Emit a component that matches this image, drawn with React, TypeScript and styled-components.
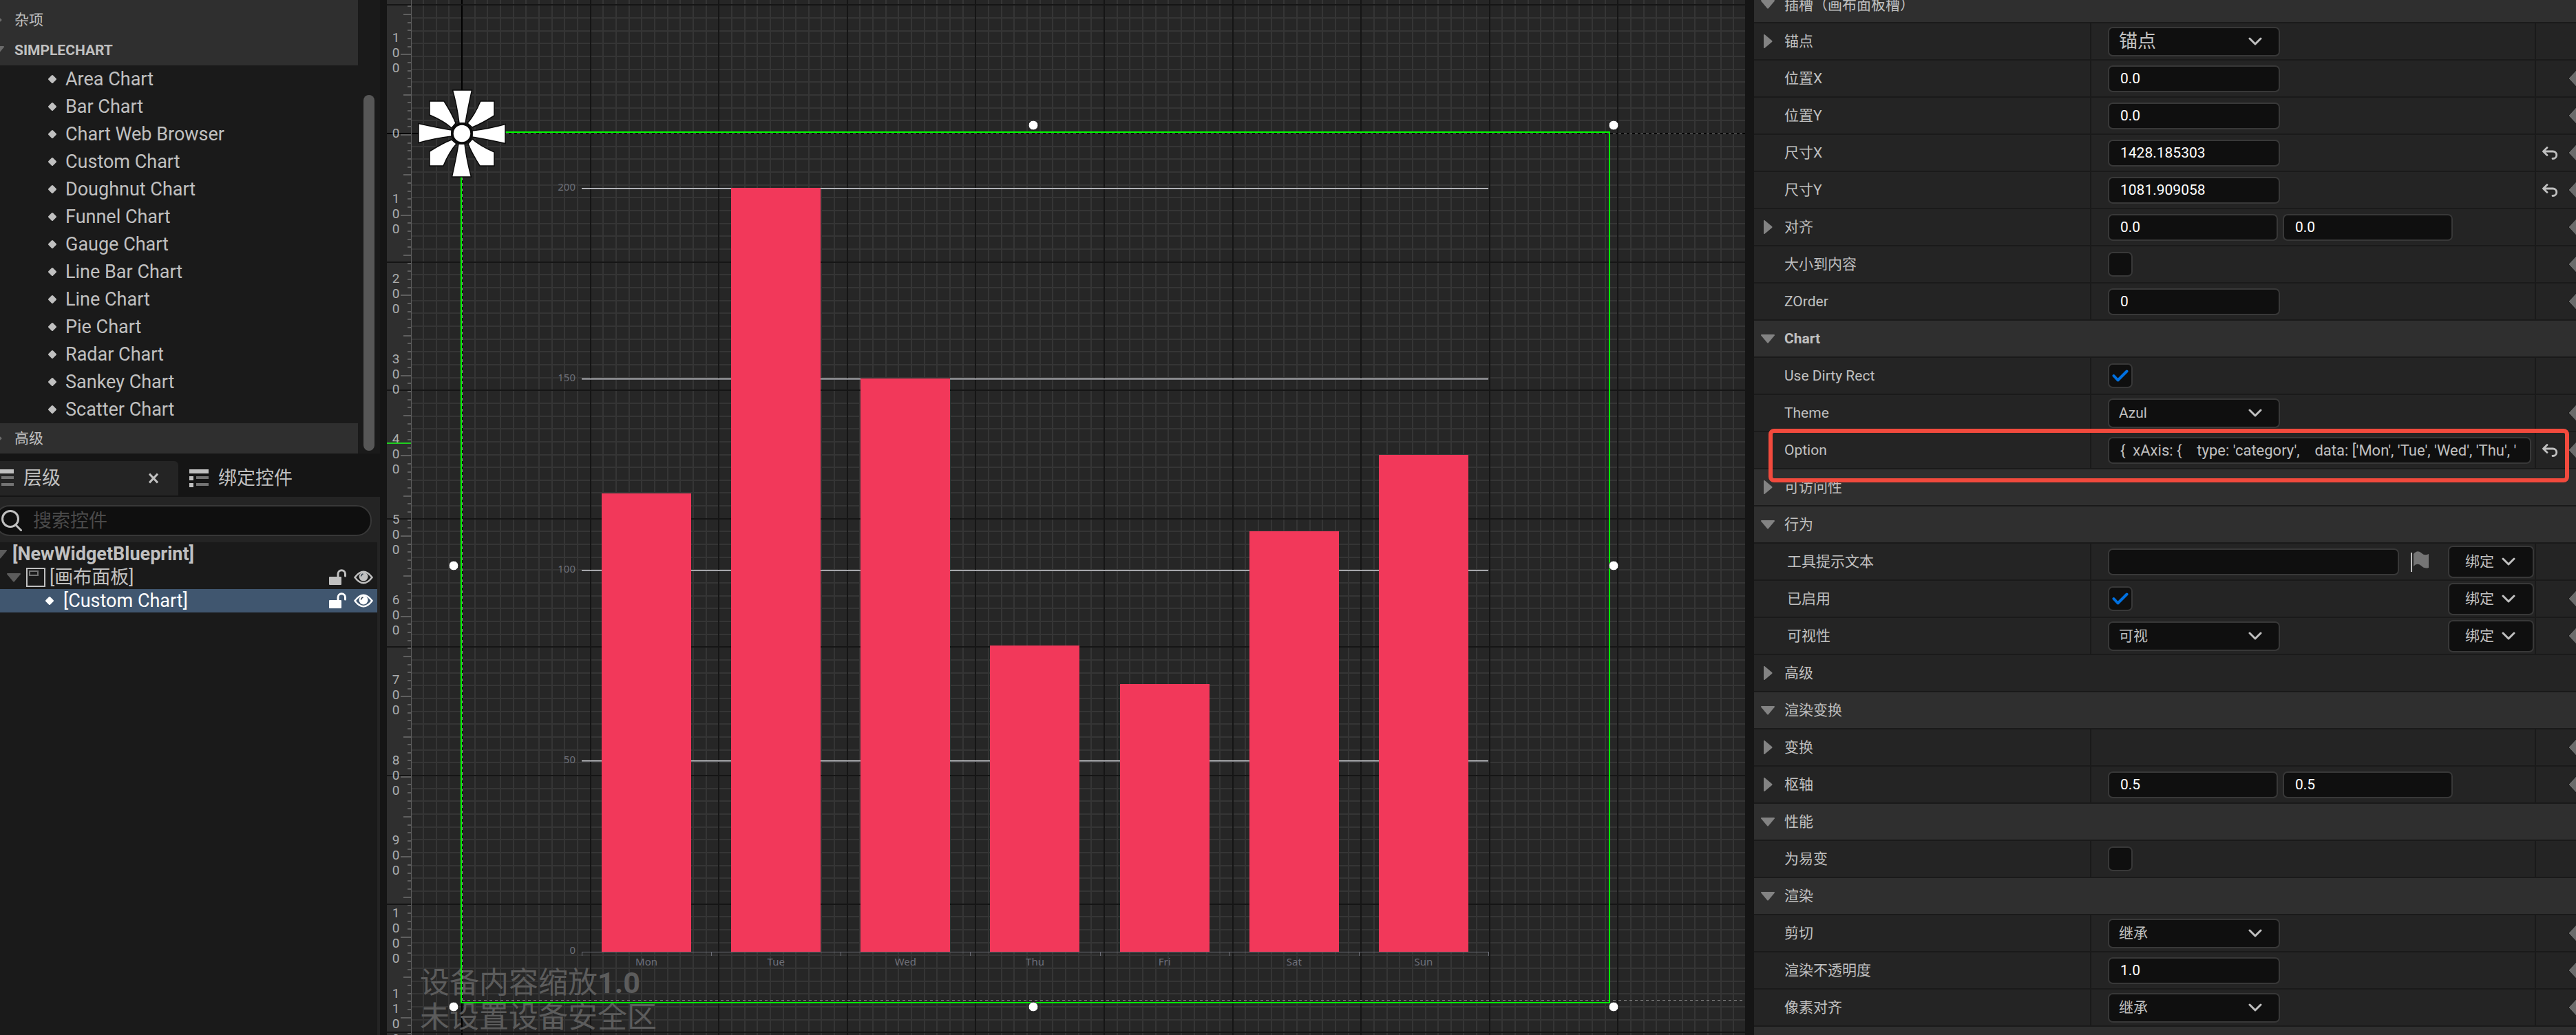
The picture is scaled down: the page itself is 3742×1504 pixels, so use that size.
import React from "react";
import styled, { createGlobalStyle, css } from "styled-components";

const color = {
  gap: "#151515",
  well: "#1a1a1a",
  panel: "#242424",
  header: "#2f2f2f",
  field: "#0f0f0f",
  edge: "#383838",
  text: "#c0c0c0",
  arrow: "#838383",
  blue: "#0070e0",
  select: "#40566f",
  bar: "#f2385a",
};

const uiFont = `Roboto, "Noto Sans CJK SC", sans-serif`;

const GlobalStyle = createGlobalStyle`
  *, *::before, *::after { box-sizing: border-box; }
  body {
    margin: 0;
    background: ${color.gap};
    color: ${color.text};
    font: 21px/28px ${uiFont};
    overflow: hidden;
  }
  button, input, select { font: inherit; color: inherit; margin: 0; }
  svg { display: block; flex: none; }
`;

const Editor = styled.div`
  display: flex;
  height: 100vh;
  overflow: hidden;
`;

/* ---------- icons ---------- */

const Expander = ({ open = false, fill = color.arrow }: { open?: boolean; fill?: string }) => (
  <svg width="20" height="20" viewBox="0 0 20 20" aria-hidden="true">
    {open ? (
      <path d="M1 4h18a1 1 0 0 1 .8 1.400L11 16q-1 1-2 0L.2 5.400A1 1 0 0 1 1 4z" fill={fill} />
    ) : (
      <path d="M4 1a1 1 0 0 1 1.600-.8L16 9q1 1 0 2L5.600 19.800A1 1 0 0 1 4 19z" fill={fill} />
    )}
  </svg>
);

const Bullet = ({ fill = color.text }: { fill?: string }) => (
  <svg width="28" height="28" viewBox="0 0 28 28" aria-hidden="true">
    <path d="M14 9.500L18.500 14L14 18.500L9.500 14z" fill={fill} stroke={fill} strokeWidth="3" strokeLinejoin="round" />
  </svg>
);

const Chevron = () => (
  <svg width="20" height="12" viewBox="0 0 20 12" aria-hidden="true">
    <path d="M2 2l8 8 8-8" fill="none" stroke={color.text} strokeWidth="3" strokeLinecap="round" strokeLinejoin="round" />
  </svg>
);

const ListIcon = () => (
  <svg width="28" height="26" viewBox="0 0 28 26" aria-hidden="true">
    <path d="M0 0h28v6H0zM0 10h6v6H0zM0 20h6v6H0z" fill={color.text} />
    <path d="M10 10h18v4H10zM10 20h18v4H10z" fill="#747474" />
  </svg>
);

const CloseIcon = () => (
  <svg width="14" height="16" viewBox="0 0 14 16" aria-hidden="true">
    <path d="M1 1.500l12 13M13 1.500l-12 13" stroke={color.text} strokeWidth="3" />
  </svg>
);

const SearchIcon = () => (
  <svg width="30" height="32" viewBox="0 0 30 32" aria-hidden="true">
    <circle cx="13" cy="13" r="11.500" fill="none" stroke={color.text} strokeWidth="3" />
    <path d="M20.500 21.500l8 8" stroke={color.text} strokeWidth="3" strokeLinecap="round" />
  </svg>
);

const PanelIcon = () => (
  <svg width="28" height="28" viewBox="0 0 28 28" aria-hidden="true">
    <rect x="1" y="1" width="26" height="26" fill="none" stroke={color.text} strokeWidth="2" />
    <rect x="5" y="5" width="12" height="6" fill="none" stroke="#747474" strokeWidth="2" />
  </svg>
);

const UnlockIcon = ({ fill }: { fill: string }) => (
  <svg width="26" height="24" viewBox="0 0 26 24" aria-hidden="true">
    <rect x="0" y="11" width="18" height="12" rx="1" fill={fill} />
    <path d="M13 12V7a5 5 0 0 1 10.500 0v3" fill="none" stroke={fill} strokeWidth="3" strokeLinecap="round" />
  </svg>
);

const EyeIcon = ({ fill }: { fill: string }) => (
  <svg width="28" height="20" viewBox="0 0 28 20" aria-hidden="true">
    <path d="M1.500 10Q14-6.500 26.500 10Q14 26.500 1.500 10z" fill="none" stroke={fill} strokeWidth="2.500" />
    <circle cx="14" cy="9" r="6.500" fill={fill} />
    <path d="M10.500 8.500a4 4 0 0 1 3-3.500" fill="none" stroke="#33404d" strokeWidth="1.500" />
  </svg>
);

const CheckIcon = () => (
  <svg width="24" height="18" viewBox="0 0 24 18" aria-hidden="true">
    <path d="M2.500 9l6 6.500L21.500 2.500" fill="none" stroke={color.blue} strokeWidth="4" strokeLinecap="round" strokeLinejoin="round" />
  </svg>
);

const ResetIcon = () => (
  <svg width="23" height="19" viewBox="0 0 23 19" aria-hidden="true">
    <path d="M7 1.500L1.500 7L7 12.500M2 7h13.500a5.200 5.200 0 0 1 0 10.500H15" fill="none" stroke={color.text} strokeWidth="2.800" strokeLinecap="round" strokeLinejoin="round" />
  </svg>
);

const KeyIcon = () => (
  <svg width="28" height="32" viewBox="0 0 28 32" aria-hidden="true">
    <path d="M1 16L14 2L27 16L14 30z" fill="#6b6b6b" stroke="#1a1a1a" strokeWidth="1" />
  </svg>
);

const FlagIcon = () => (
  <svg width="26" height="30" viewBox="0 0 26 30" aria-hidden="true">
    <path d="M1 2v28" stroke={color.text} strokeWidth="2" />
    <path d="M4 4Q10-3 16 3Q20 7 26 4V24Q20 26 15 21Q9 16 4 22z" fill="#757575" />
  </svg>
);

/* ---------- left side ---------- */

/* The left dock runs a little past the window's edge. */
const LeftDock = styled.aside`
  flex: 0 0 566px;
  margin-left: -14px;
  display: flex;
  flex-direction: column;
`;

const Palette = styled.section`
  display: flex;
  background: ${color.well};
`;

const PaletteRows = styled.div`
  flex: 1;
  padding-top: 7px;
  background: ${color.header};
`;

const PaletteHeader = styled.h3<{ $bold?: boolean }>`
  display: flex;
  align-items: center;
  gap: 15px;
  height: 44px;
  margin: 0;
  font-size: 21px;
  font-weight: ${(p) => (p.$bold ? 700 : 400)};
`;

const PaletteList = styled.ul`
  list-style: none;
  margin: 0;
  padding: 0;
  background: ${color.well};
`;

const PaletteItem = styled.li`
  display: flex;
  align-items: center;
  gap: 5px;
  height: 40px;
  padding-left: 76px;
  font-size: 27px;
`;

const ScrollTrack = styled.div`
  display: flex;
  width: 32px;
  padding: 138px 8px 4px;
`;

const ScrollThumb = styled.div`
  flex: 1;
  border-radius: 8px;
  background: #575757;
`;

const TabBar = styled.nav`
  display: flex;
  padding: 11px 0 2px;
`;

const Tab = styled.div<{ $active?: boolean }>`
  display: flex;
  align-items: center;
  gap: 14px;
  height: 50px;
  font-size: 27px;
  ${(p) =>
    p.$active
      ? css`
          width: 273px;
          padding: 0 29px 0 6px;
          background: ${color.panel};
          border-radius: 0 6px 0 0;
        `
      : css`
          padding-left: 16px;
        `}
`;

const TabClose = styled.button`
  margin-left: auto;
  padding: 0;
  border: 0;
  background: none;
`;

const SearchArea = styled.div`
  padding: 12px 12px 9px 6px;
  background: ${color.panel};
`;

const SearchBox = styled.label`
  display: flex;
  align-items: center;
  gap: 16px;
  height: 45px;
  padding-left: 8px;
  border: 2px solid ${color.edge};
  border-radius: 22px;
  background: ${color.field};
`;

const SearchInput = styled.input`
  flex: 1;
  border: 0;
  padding: 0;
  background: none;
  outline: none;
  font-size: 27px;
  line-height: 36px;
  &::placeholder { color: #4a4a4a; opacity: 1; }
`;

const Tree = styled.div`
  flex: 1;
  margin-right: 4px;
  background: ${color.well};
  font-size: 27px;
`;

const TreeSurround = styled.div`
  flex: 1;
  display: flex;
  background: ${color.panel};
`;

const TreeRow = styled.div<{ $level: number; $bold?: boolean; $selected?: boolean }>`
  display: flex;
  align-items: center;
  height: 34px;
  padding-right: 6px;
  padding-left: ${(p) => 4 + 20 * p.$level}px;
  font-weight: ${(p) => (p.$bold ? 700 : 400)};
  background: ${(p) => (p.$selected ? color.select : "transparent")};
  color: ${(p) => (p.$selected ? "#ffffff" : color.text)};
`;

const TreeArrow = styled.span`
  width: 28px;
`;

const TreeIcon = styled.span`
  width: 34px;
`;

const RowTools = styled.span`
  display: flex;
  align-items: center;
  gap: 10px;
  margin-left: auto;
`;

const charts = [
  "Area Chart", "Bar Chart", "Chart Web Browser", "Custom Chart", "Doughnut Chart",
  "Funnel Chart", "Gauge Chart", "Line Bar Chart", "Line Chart", "Pie Chart",
  "Radar Chart", "Sankey Chart", "Scatter Chart",
];

const Tools = ({ fill }: { fill: string }) => (
  <RowTools>
    <UnlockIcon fill={fill} />
    <EyeIcon fill={fill} />
  </RowTools>
);

const LeftSide = () => (
  <LeftDock>
    <Palette>
      <PaletteRows>
        <PaletteHeader><Expander fill="#6b6b6b" />杂项</PaletteHeader>
        <PaletteHeader $bold><Expander open fill="#6b6b6b" />SIMPLECHART</PaletteHeader>
        <PaletteList>
          {charts.map((name) => (
            <PaletteItem key={name}><Bullet />{name}</PaletteItem>
          ))}
        </PaletteList>
        <PaletteHeader><Expander fill="#6b6b6b" />高级</PaletteHeader>
      </PaletteRows>
      <ScrollTrack><ScrollThumb /></ScrollTrack>
    </Palette>
    <TabBar>
      <Tab $active>
        <ListIcon />层级
        <TabClose aria-label="关闭"><CloseIcon /></TabClose>
      </Tab>
      <Tab><ListIcon />绑定控件</Tab>
    </TabBar>
    <SearchArea>
      <SearchBox>
        <SearchIcon />
        <SearchInput type="text" placeholder="搜索控件" />
      </SearchBox>
    </SearchArea>
    <TreeSurround>
      <Tree>
        <TreeRow $level={0} $bold>
          <TreeArrow><Expander open fill="#5c5c5c" /></TreeArrow>[NewWidgetBlueprint]
        </TreeRow>
        <TreeRow $level={1}>
          <TreeArrow><Expander open fill="#5c5c5c" /></TreeArrow>
          <TreeIcon><PanelIcon /></TreeIcon>[画布面板]
          <Tools fill={color.text} />
        </TreeRow>
        <TreeRow $level={2} $selected>
          <TreeArrow />
          <TreeIcon><Bullet fill="#ffffff" /></TreeIcon>[Custom Chart]
          <Tools fill="#ffffff" />
        </TreeRow>
      </Tree>
    </TreeSurround>
  </LeftDock>
);

/* ---------- designer ---------- */

const Designer = styled.main`
  flex: 1;
  min-width: 0;
  display: flex;
  margin: 0 13px 0 10px;
`;

const RulerStrip = styled.div`
  flex: 0 0 36px;
  background: ${color.header};
  border-right: 1px solid #5f5f5f;
  overflow: hidden;
`;

const Surface = styled.div`
  flex: 1;
  min-width: 0;
  background: #262626;
  overflow: hidden;
`;

const Drawing = styled.svg`
  width: 100%;
  height: 100%;
`;

const RulerText = styled.text`
  font: 19px ${uiFont};
  fill: #adadad;
  text-anchor: middle;
`;

const AxisText = styled.text`
  font: 15px "Noto Sans", "Open Sans", sans-serif;
  fill: #6e7079;
`;

const SurfaceNote = styled.text`
  font: 43px ${uiFont};
  fill: #5c5c5c;
`;

const ORIGIN_X = 73;
const ORIGIN_Y = 194;
const CELL = 18.66;

const gridSteps = (from: number, to: number) =>
  Array.from({ length: to - from + 1 }, (_, i) => i + from);

const majorRows = [-1, 0, 1, 2, 3, 4, 5, 6, 7];

const Ruler = () => (
  <RulerStrip>
    <Drawing aria-hidden="true">
      {gridSteps(-16, 112).map((n) => {
        const length = n % 10 === 0 ? 16 : n % 5 === 0 ? 12 : 6;
        return <rect key={n} x={36 - length} y={Math.round(196 + n * 11.66) - 1} width={length} height="2" fill="#5f5f5f" />;
      })}
      {majorRows.map((n) => (
        <rect key={n} x="0" y={Math.round(ORIGIN_Y + n * CELL * 10) - 1} width="36" height="2" fill={n === 0 ? "#000" : "#151515"} />
      ))}
      {gridSteps(-1, 11).map((n) => {
        const digits = String(Math.abs(n) * 100).split("");
        const label = n === 0 ? ["0"] : digits;
        const first = 193 + n * 116.6 - (label.length - 1) * 11;
        return label.map((d, i) => (
          <RulerText key={`${n}-${i}`} x="13" y={Math.round(first + i * 22 + 7)}>{d}</RulerText>
        ));
      })}
      <rect x="0" y="643" width="36" height="2" fill="#1fd01f" />
    </Drawing>
  </RulerStrip>
);

const days = [
  ["Mon", 120], ["Tue", 200], ["Wed", 150], ["Thu", 80], ["Fri", 70], ["Sat", 110], ["Sun", 130],
] as const;

const PLOT_LEFT = 247;
const PLOT_RIGHT = 1564;
const PLOT_BASE = 1383;
const PLOT_UNIT = 5.545;
const BAND = (PLOT_RIGHT - PLOT_LEFT) / 7;

const BarChart = () => (
  <g>
    {[200, 150, 100, 50].map((v) => {
      const y = Math.round(PLOT_BASE - v * PLOT_UNIT);
      return (
        <g key={v}>
          <rect x={PLOT_LEFT} y={y - 1} width={PLOT_RIGHT - PLOT_LEFT} height="1" fill="#d8d9de" />
          <rect x={PLOT_LEFT} y={y} width={PLOT_RIGHT - PLOT_LEFT} height="1" fill="#77787d" />
          <AxisText x={PLOT_LEFT - 9} y={y + 3} textAnchor="end">{v}</AxisText>
        </g>
      );
    })}
    <AxisText x={PLOT_LEFT - 9} y={PLOT_BASE + 3} textAnchor="end">0</AxisText>
    {days.map(([day, value], i) => {
      const height = Math.round(value * PLOT_UNIT) + 1;
      return (
        <g key={day}>
          <rect x={Math.round(PLOT_LEFT + i * BAND + 29)} y={PLOT_BASE - height} width="130" height={height} fill={color.bar} />
          <AxisText x={PLOT_LEFT + (i + 0.5) * BAND} y="1403" textAnchor="middle">{day}</AxisText>
        </g>
      );
    })}
    <rect x={PLOT_LEFT} y={PLOT_BASE} width={PLOT_RIGHT - PLOT_LEFT} height="1" fill="#6e7079" />
    {gridSteps(0, 7).map((i) => (
      <rect key={i} x={Math.round(PLOT_LEFT + i * BAND)} y={PLOT_BASE} width="1" height="6" fill="#6e7079" />
    ))}
  </g>
);

const AnchorFlower = () => (
  <g transform={`translate(${ORIGIN_X} ${ORIGIN_Y})`} fill="#fff" stroke="#0a0a0a" strokeWidth="1.500">
    {[0, 90, 180, 270].map((turn) => (
      <g key={turn} transform={`rotate(${turn})`}>
        <path d="M-13.500-63H14.500Q8-34 5-15H-4Q-7-40-13.500-63z" />
        <path d="M-47-47H-26Q-14-28-9-15L-15-8Q-26-18-47-27z" />
      </g>
    ))}
    <circle r="14" strokeWidth="3.500" />
  </g>
);

const Grid = () => (
  <g>
    {gridSteps(-11, 72).map((n) => (
      <rect key={`r${n}`} x="0" y={Math.round(ORIGIN_Y + n * CELL) - 1} width="100%" height="2" fill="#353535" />
    ))}
    {gridSteps(-3, 110).map((n) => (
      <rect key={`c${n}`} x={Math.round(ORIGIN_X + n * CELL) - 1} y="0" width="2" height="100%" fill="#353535" />
    ))}
    {gridSteps(0, 11).map((n) => (
      <rect key={`C${n}`} x={Math.round(ORIGIN_X + n * CELL * 10) - 1} y="0" width="2" height="100%" fill={n === 0 ? "#000" : "#151515"} />
    ))}
    {majorRows.map((n) => (
      <rect key={`R${n}`} x="0" y={Math.round(ORIGIN_Y + n * CELL * 10) - 1} width="100%" height="2" fill={n === 0 ? "#000" : "#151515"} />
    ))}
  </g>
);

const handles = [
  [903, 182], [1746, 182], [61, 822], [1746, 822], [61, 1463], [903, 1463], [1746, 1463],
];

const Canvas = () => (
  <Surface>
    <Drawing role="img" aria-label="Custom Chart">
      <Grid />
      <SurfaceNote x="12" y="1443">设备内容缩放<tspan fontWeight="700">1.0</tspan></SurfaceNote>
      <SurfaceNote x="12" y="1493">未设置设备安全区</SurfaceNote>
      <g stroke="#8a8a8a" strokeDasharray="4 4">
        <line x1={ORIGIN_X} y1="194.500" x2="100%" y2="194.500" />
        <line x1={ORIGIN_X} y1="1453.500" x2="100%" y2="1453.500" />
        <line x1="73.500" y1={ORIGIN_Y} x2="73.500" y2="1453" />
      </g>
      <BarChart />
      <rect x="72" y="192" width="1668" height="1265" fill="none" stroke="#00ff00" strokeWidth="2" />
      {handles.map(([x, y]) => (
        <circle key={`${x}-${y}`} cx={x} cy={y} r="7" fill="#fff" stroke="#1a1a1a" />
      ))}
      <AnchorFlower />
    </Drawing>
  </Surface>
);

/* ---------- details ---------- */

/* The list is scrolled 20px, which cuts the first heading. */
const Details = styled.section`
  flex: 0 0 1194px;
  min-width: 0;
  margin-top: -20px;
  background: ${color.header};
`;

const Category = styled.h3<{ $plain?: boolean; $bold?: boolean }>`
  display: flex;
  align-items: center;
  gap: 14px;
  height: 54px;
  margin: 0;
  padding-left: 10px;
  border-bottom: 2px solid ${color.well};
  background: ${(p) => (p.$plain ? color.panel : color.header)};
  font-size: 21px;
  font-weight: ${(p) => (p.$bold ? 700 : 400)};
`;

/* Full-width brackets that sit in the middle of their square. */
const Bracket = styled.span`
  font-family: "Noto Sans CJK TC", sans-serif;
`;

const Property = styled.div`
  position: relative;
  display: grid;
  grid-template-columns: 488px 1fr 60px;
  height: 54px;
  border-bottom: 2px solid ${color.well};
  background: ${color.panel};
`;

const NameCell = styled.div<{ $inset?: boolean }>`
  display: flex;
  align-items: center;
  gap: 14px;
  padding-left: ${(p) => (p.$inset ? 14 : 10)}px;
`;

const ArrowSlot = styled.span`
  width: 20px;
`;

const ValueCell = styled.div`
  display: flex;
  align-items: center;
  gap: 7px;
  min-width: 0;
  padding: 0 1px 0 24px;
  border-left: 2px solid ${color.well};
`;

const StateCell = styled.div`
  display: flex;
  align-items: center;
  gap: 14px;
  padding-left: 9px;
  border-left: 2px solid ${color.well};
  overflow: hidden;
`;

const ResetSlot = styled.button`
  display: grid;
  align-items: center;
  flex: 0 0 23px;
  height: 24px;
  padding: 0;
  border: 0;
  background: none;
`;

const box = css`
  border: 2px solid ${color.edge};
  border-radius: 7px;
  background: ${color.field};
  outline: none;
`;

const Field = styled.input<{ $width?: number; $code?: boolean }>`
  ${box}
  height: 39px;
  padding: 0 16px;
  color: ${(p) => (p.$code ? color.text : "#ffffff")};
  font-size: ${(p) => (p.$code ? 22 : 21)}px;
  ${(p) => (p.$width ? css`flex: 0 0 ${p.$width}px; width: ${p.$width}px;` : css`flex: 1; min-width: 0; margin-right: 4px;`)}
`;

const SelectBox = styled.span`
  display: grid;
  align-items: center;
  width: 250px;
  & > * { grid-area: 1 / 1; }
  & > svg { justify-self: end; margin-right: 26px; pointer-events: none; }
`;

const Select = styled.select<{ $large?: boolean }>`
  ${box}
  appearance: none;
  height: 43px;
  padding: 0 14px;
  font-size: ${(p) => (p.$large ? 27 : 21)}px;
`;

const CheckBox = styled.span`
  display: grid;
  place-items: center;
  & > * { grid-area: 1 / 1; }
  & > svg { pointer-events: none; }
`;

const Check = styled.input`
  ${box}
  appearance: none;
  width: 36px;
  height: 36px;
`;

const BindButton = styled.button`
  ${box}
  display: flex;
  align-items: center;
  gap: 11px;
  width: 125px;
  height: 47px;
  margin-left: auto;
  padding: 0 0 0 23px;
`;

const FlagSlot = styled.span`
  margin-left: 10px;
`;

const Marker = styled.div`
  position: absolute;
  inset: -5px 10px -21px 21px;
  border: 6px solid #f24a3d;
  border-radius: 8px;
  z-index: 1;
  pointer-events: none;
`;

type Value =
  | { kind: "fields"; values: string[] }
  | { kind: "text"; value: string }
  | { kind: "tooltip" }
  | { kind: "select"; value: string; large?: boolean }
  | { kind: "check"; checked: boolean }
  | { kind: "none" };

type Row =
  | { heading: React.ReactNode; open?: boolean; plain?: boolean; bold?: boolean }
  | { name: string; value: Value; expand?: boolean; inset?: boolean; reset?: boolean; noKey?: boolean; bind?: boolean; marked?: boolean };

const field = (...values: string[]): Value => ({ kind: "fields", values });
const pick = (value: string, large = false): Value => ({ kind: "select", value, large });
const tick = (checked: boolean): Value => ({ kind: "check", checked });

const rows: Row[] = [
  {
    heading: (
      <span>
        插槽<Bracket lang="zh-Hant">（</Bracket>画布面板槽<Bracket lang="zh-Hant">）</Bracket>
      </span>
    ),
    open: true,
  },
  { name: "锚点", value: pick("锚点", true), expand: true, noKey: true },
  { name: "位置X", value: field("0.0") },
  { name: "位置Y", value: field("0.0") },
  { name: "尺寸X", value: field("1428.185303"), reset: true },
  { name: "尺寸Y", value: field("1081.909058"), reset: true },
  { name: "对齐", value: field("0.0", "0.0"), expand: true },
  { name: "大小到内容", value: tick(false) },
  { name: "ZOrder", value: field("0") },
  { heading: "Chart", open: true, bold: true },
  { name: "Use Dirty Rect", value: tick(true), noKey: true },
  { name: "Theme", value: pick("Azul") },
  {
    name: "Option",
    value: { kind: "text", value: "{  xAxis: {    type: 'category',    data: ['Mon', 'Tue', 'Wed', 'Thu', '" },
    reset: true,
    marked: true,
  },
  { heading: "可访问性" },
  { heading: "行为", open: true },
  { name: "工具提示文本", value: { kind: "tooltip" }, inset: true, noKey: true, bind: true },
  { name: "已启用", value: tick(true), inset: true, bind: true },
  { name: "可视性", value: pick("可视"), inset: true, bind: true },
  { heading: "高级", plain: true },
  { heading: "渲染变换", open: true },
  { name: "变换", value: { kind: "none" }, expand: true },
  { name: "枢轴", value: field("0.5", "0.5"), expand: true },
  { heading: "性能", open: true },
  { name: "为易变", value: tick(false), noKey: true },
  { heading: "渲染", open: true },
  { name: "剪切", value: pick("继承") },
  { name: "渲染不透明度", value: field("1.0") },
  { name: "像素对齐", value: pick("继承") },
];

const Editing = ({ value, id, name }: { value: Value; id: string; name: string }) => {
  switch (value.kind) {
    case "fields":
      return (
        <>
          {value.values.map((v, i) => (
            <Field
              key={i}
              id={i === 0 ? id : `${id}-${i}`}
              aria-label={i === 0 ? undefined : name}
              type="text"
              defaultValue={v}
              $width={value.values.length > 1 ? 247 : 250}
            />
          ))}
        </>
      );
    case "text":
      return <Field id={id} type="text" defaultValue={value.value} $code />;
    case "tooltip":
      return (
        <>
          <Field id={id} type="text" $width={423} />
          <FlagSlot><FlagIcon /></FlagSlot>
        </>
      );
    case "select":
      return (
        <SelectBox>
          <Select id={id} defaultValue={value.value} $large={value.large}>
            <option>{value.value}</option>
          </Select>
          <Chevron />
        </SelectBox>
      );
    case "check":
      return (
        <CheckBox>
          <Check id={id} type="checkbox" defaultChecked={value.checked} />
          {value.checked && <CheckIcon />}
        </CheckBox>
      );
    default:
      return null;
  }
};

const DetailsPanel = () => (
  <Details>
    {rows.map((row, i) => {
      if ("heading" in row) {
        return (
          <Category key={i} $plain={row.plain} $bold={row.bold}>
            <Expander open={row.open} />
            {row.heading}
          </Category>
        );
      }
      const id = `property-${i}`;
      return (
        <Property key={i}>
          <NameCell $inset={row.inset}>
            <ArrowSlot>{row.expand && <Expander />}</ArrowSlot>
            {row.value.kind === "none" ? <span>{row.name}</span> : <label htmlFor={id}>{row.name}</label>}
          </NameCell>
          <ValueCell>
            <Editing value={row.value} id={id} name={row.name} />
            {row.bind && <BindButton>绑定<Chevron /></BindButton>}
          </ValueCell>
          <StateCell>
            {row.reset ? <ResetSlot aria-label="重置"><ResetIcon /></ResetSlot> : <ResetSlot as="span" />}
            {!row.noKey && <KeyIcon />}
          </StateCell>
          {row.marked && <Marker />}
        </Property>
      );
    })}
  </Details>
);

export default function App() {
  return (
    <>
      <GlobalStyle />
      <Editor>
        <LeftSide />
        <Designer>
          <Ruler />
          <Canvas />
        </Designer>
        <DetailsPanel />
      </Editor>
    </>
  );
}
